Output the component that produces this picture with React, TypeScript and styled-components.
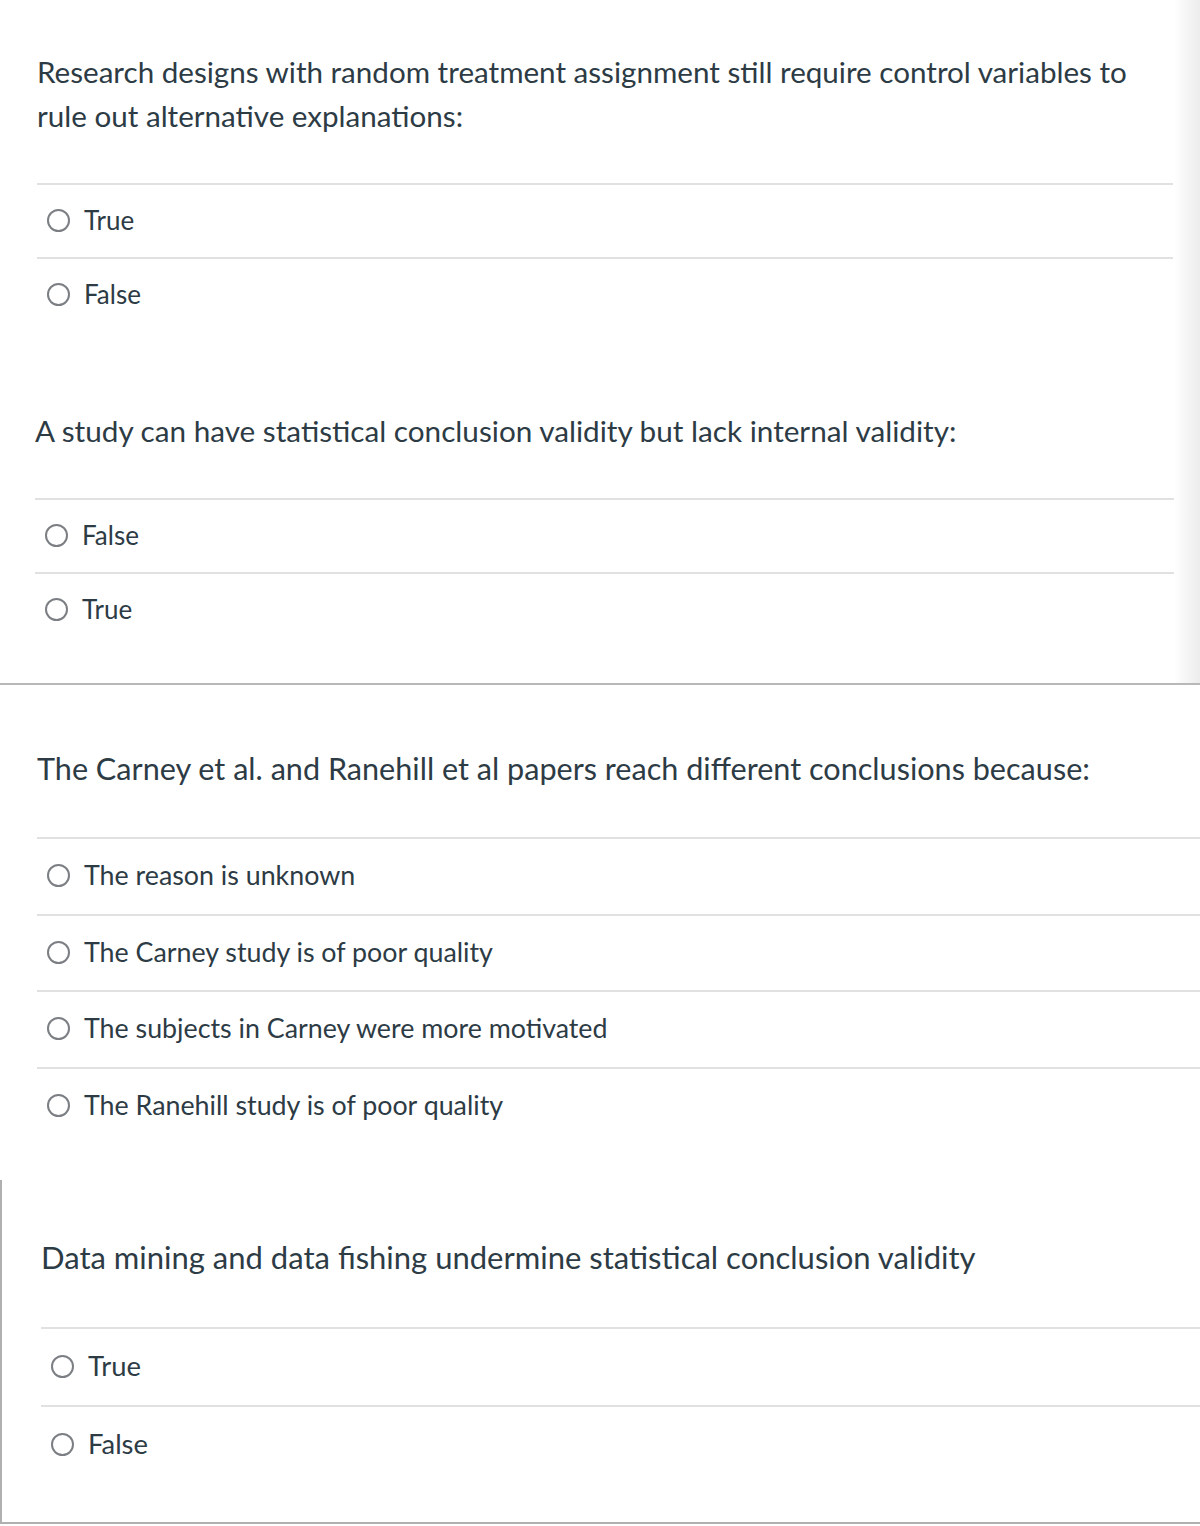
import styled, { createGlobalStyle } from 'styled-components';

const GlobalStyle = createGlobalStyle`
	html, body {
		margin: 0;
		padding: 0;
		background: #ffffff;
	}
	body {
		font-family: Lato, 'Open Sans', sans-serif;
		color: #2d3b45;
	}
`;

type QuestionData = {
	prompt: string[];
	options: string[];
};

const questions: QuestionData[] = [
	{
		prompt: [
			'Research designs with random treatment assignment still require control variables to',
			'rule out alternative explanations:',
		],
		options: ['True', 'False'],
	},
	{
		prompt: ['A study can have statistical conclusion validity but lack internal validity:'],
		options: ['False', 'True'],
	},
	{
		prompt: ['The Carney et al. and Ranehill et al papers reach different conclusions because:'],
		options: [
			'The reason is unknown',
			'The Carney study is of poor quality',
			'The subjects in Carney were more motivated',
			'The Ranehill study is of poor quality',
		],
	},
	{
		prompt: ['Data mining and data fishing undermine statistical conclusion validity'],
		options: ['True', 'False'],
	},
];

type QuestionProps = {
	data: QuestionData;
	left: number;
	right: number;
	top: number;
	gap: number;
	rowHeight: number;
	bottom: number;
	promptSize: number;
	optionSize: number;
};

const Question = ({ data, left, right, top, gap, rowHeight, bottom, promptSize, optionSize }: QuestionProps) => {
	return (
		<QuestionWrapper $left={left} $right={right} $top={top} $bottom={bottom}>
			<Prompt $gap={gap} $size={promptSize}>
				{data.prompt.map((line) => (
					<div key={line}>{line}</div>
				))}
			</Prompt>
			<OptionList>
				{data.options.map((opt) => (
					<OptionRow key={opt} $height={rowHeight}>
						<Radio />
						<OptionLabel $size={optionSize}>{opt}</OptionLabel>
					</OptionRow>
				))}
			</OptionList>
		</QuestionWrapper>
	);
};

const App = () => {
	return (
		<>
			<GlobalStyle />
			<Page>
				<TopShot>
					<TopContent>
						<Question
							data={questions[0]}
							left={37}
							right={1}
							top={50}
							gap={45}
							rowHeight={74}
							bottom={0}
							promptSize={29.6}
							optionSize={26}
						/>
						<Question
							data={questions[1]}
							left={35}
							right={0}
							top={78}
							gap={45}
							rowHeight={74}
							bottom={37}
							promptSize={29.7}
							optionSize={26}
						/>
					</TopContent>
					<Shade />
				</TopShot>
				<MiddleShot>
					<Question
						data={questions[2]}
						left={37}
						right={0}
						top={62}
						gap={46}
						rowHeight={76.7}
						bottom={35}
						promptSize={30.6}
						optionSize={26.8}
					/>
				</MiddleShot>
				<BottomShot>
					<Question
						data={questions[3]}
						left={39}
						right={0}
						top={55}
						gap={48}
						rowHeight={78}
						bottom={37}
						promptSize={31}
						optionSize={27.4}
					/>
				</BottomShot>
			</Page>
		</>
	);
};

export default App;

const Page = styled.div`
	width: 1200px;
	height: 1526px;
	background: #ffffff;
	overflow: hidden;
`;

// first screenshot: two questions, grey shade on the right edge
const TopShot = styled.div`
	display: flex;
	border-bottom: 2px solid #b8b8b8;
`;

const TopContent = styled.div`
	flex: 1;
`;

const Shade = styled.div`
	width: 26px;
	background: linear-gradient(to right, #ffffff 0%, #f6f6f6 45%, #ececec 100%);
`;

const MiddleShot = styled.div`
	height: 495px;
`;

const BottomShot = styled.div`
	height: 342px;
	border-left: 2px solid #b0b0b0;
	border-bottom: 2px solid #b0b0b0;
`;

const QuestionWrapper = styled.div<{ $left: number; $right: number; $top: number; $bottom: number }>`
	padding: ${(p) => p.$top}px ${(p) => p.$right}px ${(p) => p.$bottom}px ${(p) => p.$left}px;
`;

const Prompt = styled.div<{ $gap: number; $size: number }>`
	font-size: ${(p) => p.$size}px;
	line-height: 44px;
	color: #2d3b45;
	margin-bottom: ${(p) => p.$gap}px;
	white-space: nowrap;
`;

const OptionList = styled.div`
	display: flex;
	flex-direction: column;
`;

const OptionRow = styled.div<{ $height: number }>`
	height: ${(p) => p.$height}px;
	box-sizing: border-box;
	border-top: 2px solid #e1e1e1;
	display: flex;
	align-items: center;
	padding-left: 10px;
	padding-bottom: 3px;
	gap: 14px;
`;

const Radio = styled.span`
	width: 23px;
	height: 23px;
	box-sizing: border-box;
	border: 2px solid #7b7f83;
	border-radius: 50%;
	flex-shrink: 0;
	margin-top: 1px;
`;

const OptionLabel = styled.span<{ $size: number }>`
	font-size: ${(p) => p.$size}px;
	color: #2d3b45;
`;
